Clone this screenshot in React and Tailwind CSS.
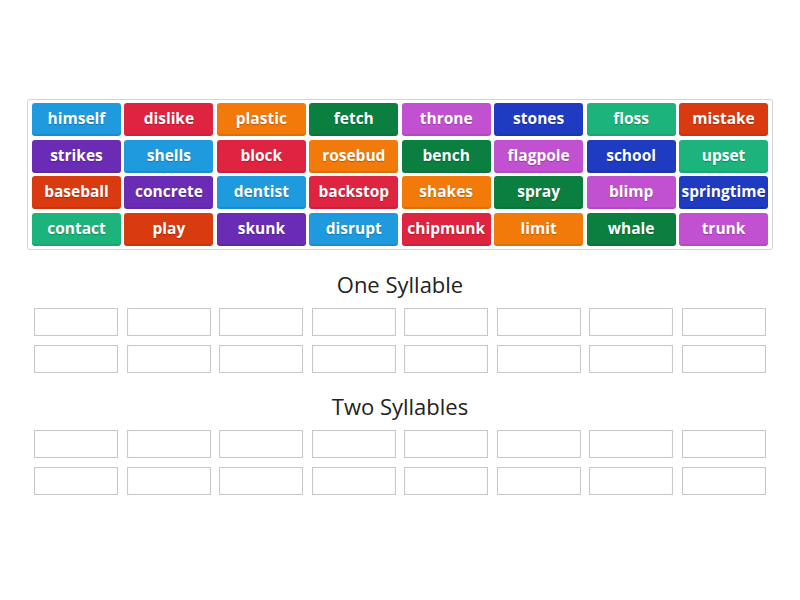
const COLORS = {
  blue: 'bg-[#1f9ade]',
  red: 'bg-[#de2440]',
  orange: 'bg-[#f17a0b]',
  green: 'bg-[#0b7f3f]',
  pink: 'bg-[#c251d2]',
  navy: 'bg-[#1f3bc2]',
  teal: 'bg-[#1db37c]',
  rust: 'bg-[#d93a10]',
  violet: 'bg-[#6a2cb4]',
};

const words = [
  ['himself', 'blue'], ['dislike', 'red'], ['plastic', 'orange'], ['fetch', 'green'],
  ['throne', 'pink'], ['stones', 'navy'], ['floss', 'teal'], ['mistake', 'rust'],
  ['strikes', 'violet'], ['shells', 'blue'], ['block', 'red'], ['rosebud', 'orange'],
  ['bench', 'green'], ['flagpole', 'pink'], ['school', 'navy'], ['upset', 'teal'],
  ['baseball', 'rust'], ['concrete', 'violet'], ['dentist', 'blue'], ['backstop', 'red'],
  ['shakes', 'orange'], ['spray', 'green'], ['blimp', 'pink'], ['springtime', 'navy'],
  ['contact', 'teal'], ['play', 'rust'], ['skunk', 'violet'], ['disrupt', 'blue'],
  ['chipmunk', 'red'], ['limit', 'orange'], ['whale', 'green'], ['trunk', 'pink'],
];

function Tile({ word, color }) {
  return (
    <div
      className={`${COLORS[color]} h-[33px] pb-[1px] rounded-[3px] flex items-center justify-center text-white text-[15.5px] font-bold whitespace-nowrap shadow-[inset_0_-2px_0_rgba(0,0,0,0.08)] [text-shadow:0_1px_1px_rgba(0,0,0,0.25)]`}
    >
      {word}
    </div>
  );
}

function DropGroup({ title }) {
  return (
    <div>
      <div className="h-[28px] leading-[26px] text-center text-[22px] text-[#222]">{title}</div>
      <div className="w-[732px] mx-auto mt-[9px] grid grid-cols-8 gap-x-[8.5px] gap-y-[9px]">
        {Array.from({ length: 16 }).map((_, i) => (
          <div key={i} className="h-[28px] bg-white border border-[#c8c8c8] shadow-[inset_0_0_2px_rgba(0,0,0,0.06)]" />
        ))}
      </div>
    </div>
  );
}

export default function App() {
  return (
    <div className="w-[800px] h-[600px] bg-white overflow-hidden font-['Open_Sans',sans-serif]">
      <div className="w-[746px] mx-auto mt-[99px] border border-[#d4d4d4] rounded-[3px] px-[4px] py-[3px]">
        <div className="grid grid-cols-8 gap-[3.5px]">
          {words.map(([w, c]) => (
            <Tile key={w} word={w} color={c} />
          ))}
        </div>
      </div>

      <div className="mt-[21px]">
        <DropGroup title="One Syllable" />
      </div>
      <div className="mt-[20px]">
        <DropGroup title="Two Syllables" />
      </div>
    </div>
  );
}
